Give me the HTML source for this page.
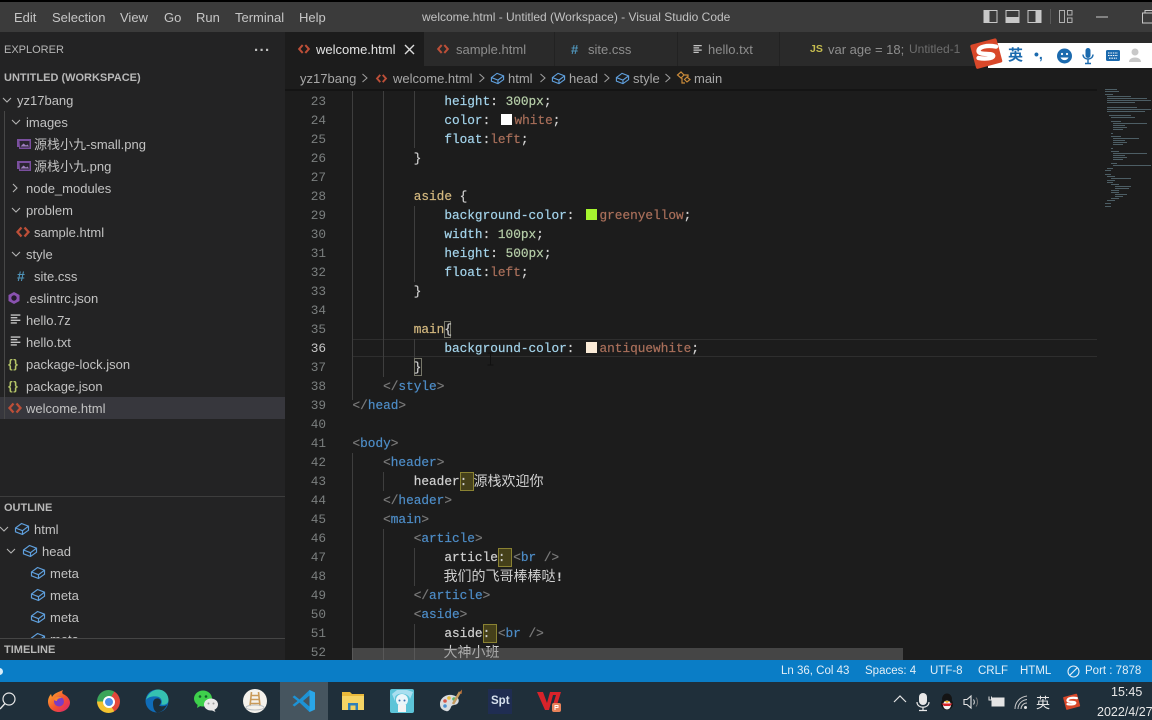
<!DOCTYPE html>
<html><head><meta charset="utf-8"><title>welcome.html - Visual Studio Code</title>
<style>
html,body{margin:0;padding:0;background:#1c1c1c}
#r{position:relative;width:1152px;height:720px;overflow:hidden;background:#1c1c1c;font-family:"Liberation Sans","Noto Sans CJK SC",sans-serif;color:#ccc;filter:blur(.3px)}
.a{position:absolute}
.t{position:absolute;white-space:nowrap}
.m{top:9px;font-size:13px;color:#c6c6c6;line-height:17px}
.tab{position:absolute;top:32px;height:34px;background:#2a2a2a;border-right:1px solid #222}
.tl{position:absolute;top:41px;font-size:13px;line-height:17px;color:#8e8e8e;white-space:nowrap}
.bc{position:absolute;top:70px;font-size:13px;line-height:17px;color:#a8a8a8;white-space:nowrap}
.row{position:absolute;font-size:13px;line-height:22px;height:22px;color:#c2c2c2;white-space:nowrap;margin-top:1px}
.ln{position:absolute;left:296px;width:30px;text-align:right;font:12.75px/19px "Liberation Mono",monospace;color:#7b7f7f;height:19px}
.c{position:absolute;font:12.75px/19px "Liberation Mono","Noto Sans CJK SC",monospace;white-space:pre;height:19px;color:#d0d0d0;margin-left:-.5px;-webkit-text-stroke:.2px}
.p{color:#a3d3ea}.v{color:#a96f5a}.n{color:#b7cfa9}.s{color:#d3b87f}.g{color:#7a7a7a}.k{color:#4d8cc6}.w{color:#d4d4d4}
.z{font-size:14px;color:#d0d0d0;margin-top:2px;-webkit-text-stroke:0}
.box{background:#45401a;outline:1px solid #8a8232;outline-offset:-1px}
.ig{position:absolute;width:1px;background:#3e3e3e}
.sw{display:inline-block;width:11px;height:11px;vertical-align:-1px}
.st{position:absolute;top:664px;font-size:11.5px;line-height:15px;color:#e3eef6;white-space:nowrap}
.tk{position:absolute;top:689px;width:24px;height:24px}
</style></head><body><div id="r">
<svg width="0" height="0" style="position:absolute"><defs>
<symbol id="cube" viewBox="0 0 16 16"><path d="M1.5 7 7.5 2.5 14.5 5.2V9.2L8.5 13.5 1.5 10.8Z M1.5 7 8.5 9.7 14.5 5.2 M8.5 9.7V13.5" fill="none" stroke="#5f9fdc" stroke-width="1.2"/></symbol>
<symbol id="html" viewBox="0 0 16 16"><path d="M6.5 3.5 2.5 8 6.5 12.5 M9.5 3.5 13.5 8 9.5 12.5" fill="none" stroke="#bd4f38" stroke-width="2.3"/></symbol>
<symbol id="img" viewBox="0 0 16 16"><path d="M1 3H15V13H3V11H1Z" fill="#7a4f9e"/><path d="M3.5 5H13.5V11.5H4Z" fill="#2a2530"/><path d="M4.5 10.5 7.5 7.5 10 9.5 11.5 8.5 13 10.5Z" fill="#a07fc0"/></symbol>
<symbol id="lines" viewBox="0 0 16 16"><path d="M2 3.5H13 M2 6.5H9.5 M2 9.5H13 M2 12.5H9" stroke="#c4c4c4" stroke-width="1.6"/></symbol>
<symbol id="ch" viewBox="0 0 10 10"><path d="M1 3 5 7 9 3" fill="none" stroke="#b4b4b4" stroke-width="1.1"/></symbol>
<symbol id="chr" viewBox="0 0 10 10"><path d="M3 1 7 5 3 9" fill="none" stroke="#b4b4b4" stroke-width="1.1"/></symbol>
<symbol id="sep" viewBox="0 0 8 12"><path d="M1.5 2 6 6 1.5 10" fill="none" stroke="#a0a0a0" stroke-width="1"/></symbol>
<symbol id="sg" viewBox="0 0 30 30"><rect x="2.5" y="3.5" width="24" height="22" rx="1.5" transform="rotate(-15 15 15)" fill="#d9482a"/><path d="M23 8.5C15 7 7.5 8.5 7.5 12.5 8 16.5 20 13.5 20.5 16.5 20.5 19 13 19.5 7.5 18.5" fill="none" stroke="#fff" stroke-width="3.8" stroke-linecap="round"/></symbol>
</defs></svg>

<!-- title bar -->
<div class="a" style="left:0;top:0;width:1152px;height:2px;background:#000"></div>
<div class="a" style="left:0;top:2px;width:1152px;height:30px;background:#3b3b3b"></div>
<span class="t m" style="left:14px">Edit</span><span class="t m" style="left:52px">Selection</span><span class="t m" style="left:120px">View</span><span class="t m" style="left:164px">Go</span><span class="t m" style="left:196px">Run</span><span class="t m" style="left:235px">Terminal</span><span class="t m" style="left:299px">Help</span>
<span class="t" style="left:422px;top:9px;font-size:12px;line-height:17px;color:#c2c2c2">welcome.html - Untitled (Workspace) - Visual Studio Code</span>
<svg class="a" style="left:980px;top:8px" width="172" height="18" viewBox="0 0 172 18">
<rect x="4" y="2.5" width="13" height="12" fill="none" stroke="#c8c8c8"/><rect x="4" y="2.5" width="5.5" height="12" fill="#c8c8c8"/>
<rect x="26" y="2.5" width="13" height="12" fill="none" stroke="#c8c8c8"/><rect x="26" y="9" width="13" height="5.5" fill="#c8c8c8"/>
<rect x="48" y="2.5" width="13" height="12" fill="none" stroke="#c8c8c8"/><rect x="55.5" y="2.5" width="5.5" height="12" fill="#c8c8c8"/>
<path d="M70.5 1V16" stroke="#5a5a5a"/>
<rect x="79.5" y="2.5" width="5" height="12" fill="none" stroke="#b0b0b0"/><rect x="87.5" y="2.5" width="4.5" height="4.5" fill="none" stroke="#b0b0b0"/><rect x="87.5" y="10" width="4.5" height="4.5" fill="none" stroke="#b0b0b0"/>
<path d="M116 9H128" stroke="#c8c8c8"/>
<rect x="162.5" y="5" width="10" height="10" fill="none" stroke="#c8c8c8"/><path d="M165 5V2.5H175" fill="none" stroke="#c8c8c8"/>
</svg>

<!-- sidebar -->
<div class="a" style="left:0;top:32px;width:285px;height:628px;background:#232324"></div>
<span class="t" style="left:4px;top:43px;font-size:11px;line-height:15px;color:#b6b6b6">EXPLORER</span>
<span class="t" style="left:254px;top:41px;font-size:15px;line-height:20px;color:#c0c0c0;font-weight:bold;letter-spacing:.5px">···</span>
<span class="t" style="left:4px;top:71px;font-size:11px;line-height:15px;font-weight:bold;color:#b8b8b8">UNTITLED (WORKSPACE)</span>
<div class="a" style="left:0;top:397px;width:285px;height:22px;background:#37373d"></div>
<div class="a" style="left:4px;top:111px;width:1px;height:308px;background:#474747"></div>

<svg class="a" style="left:2px;top:95px" width="10" height="10"><use href="#ch"/></svg><div class="row" style="left:17px;top:89px">yz17bang</div>
<svg class="a" style="left:11px;top:117px" width="10" height="10"><use href="#ch"/></svg><div class="row" style="left:26px;top:111px">images</div>
<svg class="a" style="left:16px;top:136px" width="16" height="16"><use href="#img"/></svg><div class="row" style="left:34px;top:133px">源栈小九-small.png</div>
<svg class="a" style="left:16px;top:158px" width="16" height="16"><use href="#img"/></svg><div class="row" style="left:34px;top:155px">源栈小九.png</div>
<svg class="a" style="left:10px;top:183px" width="10" height="10"><use href="#chr"/></svg><div class="row" style="left:26px;top:177px">node_modules</div>
<svg class="a" style="left:11px;top:205px" width="10" height="10"><use href="#ch"/></svg><div class="row" style="left:26px;top:199px">problem</div>
<svg class="a" style="left:15px;top:224px" width="16" height="16"><use href="#html"/></svg><div class="row" style="left:34px;top:221px">sample.html</div>
<svg class="a" style="left:11px;top:249px" width="10" height="10"><use href="#ch"/></svg><div class="row" style="left:26px;top:243px">style</div>
<span class="t" style="left:17px;top:268px;font-size:14px;line-height:16px;font-weight:bold;color:#4f93b8">#</span><div class="row" style="left:34px;top:265px">site.css</div>
<svg class="a" style="left:7px;top:291px" width="14" height="14" viewBox="0 0 14 14"><path d="M7 1 12.5 4V10L7 13 1.5 10V4Z" fill="#8a52b0"/><circle cx="7" cy="7" r="2.7" fill="#241c2c"/></svg><div class="row" style="left:26px;top:287px">.eslintrc.json</div>
<svg class="a" style="left:9px;top:312px" width="14" height="14" viewBox="0 0 16 16"><use href="#lines"/></svg><div class="row" style="left:26px;top:309px">hello.7z</div>
<svg class="a" style="left:9px;top:334px" width="14" height="14" viewBox="0 0 16 16"><use href="#lines"/></svg><div class="row" style="left:26px;top:331px">hello.txt</div>
<span class="t" style="left:8px;top:356px;font-size:12px;line-height:16px;font-weight:bold;color:#b4c468;letter-spacing:.6px">{}</span><div class="row" style="left:26px;top:353px">package-lock.json</div>
<span class="t" style="left:8px;top:378px;font-size:12px;line-height:16px;font-weight:bold;color:#b4c468;letter-spacing:.6px">{}</span><div class="row" style="left:26px;top:375px">package.json</div>
<svg class="a" style="left:7px;top:400px" width="16" height="16"><use href="#html"/></svg><div class="row" style="left:26px;top:397px">welcome.html</div>

<div class="a" style="left:0;top:496px;width:285px;height:1px;background:#3d3d3d"></div>
<span class="t" style="left:4px;top:501px;font-size:11px;line-height:15px;font-weight:bold;color:#b8b8b8">OUTLINE</span>
<div class="a" style="left:0;top:518px;width:285px;height:120px;overflow:hidden">
<svg class="a" style="left:-1px;top:6px" width="10" height="10"><use href="#ch"/></svg>
<svg class="a" style="left:14px;top:3px" width="16" height="16"><use href="#cube"/></svg><div class="row" style="left:34px;top:0">html</div>
<svg class="a" style="left:6px;top:28px" width="10" height="10"><use href="#ch"/></svg>
<svg class="a" style="left:22px;top:25px" width="16" height="16"><use href="#cube"/></svg><div class="row" style="left:42px;top:22px">head</div>
<svg class="a" style="left:30px;top:47px" width="16" height="16"><use href="#cube"/></svg><div class="row" style="left:50px;top:44px">meta</div>
<svg class="a" style="left:30px;top:69px" width="16" height="16"><use href="#cube"/></svg><div class="row" style="left:50px;top:66px">meta</div>
<svg class="a" style="left:30px;top:91px" width="16" height="16"><use href="#cube"/></svg><div class="row" style="left:50px;top:88px">meta</div>
<svg class="a" style="left:30px;top:113px" width="16" height="16"><use href="#cube"/></svg><div class="row" style="left:50px;top:110px">meta</div>
</div>
<div class="a" style="left:0;top:638px;width:285px;height:1px;background:#454545"></div>
<span class="t" style="left:4px;top:643px;font-size:11px;line-height:15px;font-weight:bold;color:#b8b8b8">TIMELINE</span>

<!-- tabs -->
<div class="a" style="left:285px;top:32px;width:867px;height:34px;background:#242425"></div>
<div class="a" style="left:285px;top:32px;width:139px;height:34px;background:#1c1c1c"></div>
<div class="tab" style="left:424px;width:130px"></div>
<div class="tab" style="left:555px;width:122px"></div>
<div class="tab" style="left:678px;width:101px"></div>
<div class="tab" style="left:780px;width:372px"></div>
<svg class="a" style="left:297px;top:42px" width="14" height="14"><use href="#html"/></svg>
<span class="t" style="left:316px;top:41px;font-size:13px;line-height:17px;color:#e4e4e4">welcome.html</span>
<svg class="a" style="left:404px;top:44px" width="11" height="11" viewBox="0 0 11 11"><path d="M1 1 10 10M10 1 1 10" stroke="#ddd" stroke-width="1.4"/></svg>
<svg class="a" style="left:436px;top:42px" width="14" height="14"><use href="#html"/></svg><span class="tl" style="left:456px">sample.html</span>
<span class="t" style="left:571px;top:41px;font-size:13px;line-height:17px;font-weight:bold;color:#4f93b8">#</span><span class="tl" style="left:588px">site.css</span>
<svg class="a" style="left:692px;top:43px" width="12" height="12" viewBox="0 0 16 16"><use href="#lines"/></svg><span class="tl" style="left:708px">hello.txt</span>
<span class="t" style="left:810px;top:42px;font-size:10.5px;line-height:15px;font-weight:bold;color:#c6bd4f">JS</span><span class="tl" style="left:828px">var age = 18;</span><span class="tl" style="left:909px;font-size:12px;color:#6e6e6e">Untitled-1</span>

<!-- breadcrumbs -->
<span class="bc" style="left:300px">yz17bang</span>
<svg class="a" style="left:361px;top:72px" width="8" height="12"><use href="#sep"/></svg>
<svg class="a" style="left:375px;top:72px" width="13" height="13"><use href="#html"/></svg>
<span class="bc" style="left:393px">welcome.html</span>
<svg class="a" style="left:478px;top:72px" width="8" height="12"><use href="#sep"/></svg>
<svg class="a" style="left:490px;top:71px" width="15" height="15"><use href="#cube"/></svg>
<span class="bc" style="left:508px">html</span>
<svg class="a" style="left:539px;top:72px" width="8" height="12"><use href="#sep"/></svg>
<svg class="a" style="left:551px;top:71px" width="15" height="15"><use href="#cube"/></svg>
<span class="bc" style="left:569px">head</span>
<svg class="a" style="left:603px;top:72px" width="8" height="12"><use href="#sep"/></svg>
<svg class="a" style="left:615px;top:71px" width="15" height="15"><use href="#cube"/></svg>
<span class="bc" style="left:633px">style</span>
<svg class="a" style="left:664px;top:72px" width="8" height="12"><use href="#sep"/></svg>
<svg class="a" style="left:676px;top:70px" width="16" height="16" viewBox="0 0 16 16"><path d="M5 2 1.5 5 5 8 8 5ZM11 7 8.5 9.5 11 12 14 9.5ZM6 8V13H9M8 5H12V7" fill="none" stroke="#c98a3a" stroke-width="1.2"/></svg>
<span class="bc" style="left:694px">main</span>

<!-- editor -->
<div class="a" style="left:285px;top:89px;width:812px;height:2px;background:#141414"></div>
<div class="a" style="left:353px;top:339px;width:744px;height:1px;background:#2e2e2e"></div>
<div class="a" style="left:353px;top:356px;width:744px;height:1px;background:#2e2e2e"></div>
<div class="ig" style="left:352px;top:91px;height:309px"></div>
<div class="ig" style="left:383px;top:91px;height:286px"></div>
<div class="ig" style="left:414px;top:91px;height:57px"></div>
<div class="ig" style="left:414px;top:206px;height:76px"></div>
<div class="ig" style="left:414px;top:339px;height:19px"></div>
<div class="ig" style="left:352px;top:453px;height:207px"></div>
<div class="ig" style="left:383px;top:472px;height:19px"></div>
<div class="ig" style="left:383px;top:529px;height:131px"></div>
<div class="ig" style="left:414px;top:548px;height:38px"></div>
<div class="ig" style="left:414px;top:624px;height:36px"></div>

<span class="ln" style="top:92px">23</span><span class="c" style="left:353px;top:92px">            <span class="p">height</span><span class="w">: </span><span class="n">300px</span><span class="w">;</span></span>
<span class="ln" style="top:111px">24</span><span class="c" style="left:353px;top:111px">            <span class="p">color</span><span class="w">: </span></span><span class="a sw" style="left:501px;top:114px;background:#fff"></span><span class="c" style="left:515px;top:111px"><span class="v">white</span><span class="w">;</span></span>
<span class="ln" style="top:130px">25</span><span class="c" style="left:353px;top:130px">            <span class="p">float</span><span class="w">:</span><span class="v">left</span><span class="w">;</span></span>
<span class="ln" style="top:149px">26</span><span class="c" style="left:353px;top:149px">        }</span>
<span class="ln" style="top:168px">27</span>
<span class="ln" style="top:187px">28</span><span class="c" style="left:353px;top:187px">        <span class="s">aside</span> {</span>
<span class="ln" style="top:206px">29</span><span class="c" style="left:353px;top:206px">            <span class="p">background-color</span><span class="w">: </span></span><span class="a sw" style="left:586px;top:209px;background:#a6f52f"></span><span class="c" style="left:600px;top:206px"><span class="v">greenyellow</span><span class="w">;</span></span>
<span class="ln" style="top:225px">30</span><span class="c" style="left:353px;top:225px">            <span class="p">width</span><span class="w">: </span><span class="n">100px</span><span class="w">;</span></span>
<span class="ln" style="top:244px">31</span><span class="c" style="left:353px;top:244px">            <span class="p">height</span><span class="w">: </span><span class="n">500px</span><span class="w">;</span></span>
<span class="ln" style="top:263px">32</span><span class="c" style="left:353px;top:263px">            <span class="p">float</span><span class="w">:</span><span class="v">left</span><span class="w">;</span></span>
<span class="ln" style="top:282px">33</span><span class="c" style="left:353px;top:282px">        }</span>
<span class="ln" style="top:301px">34</span>
<span class="a" style="left:444px;top:321px;width:7px;height:17px;box-sizing:border-box;border:1px solid #77776a"></span>
<span class="ln" style="top:320px">35</span><span class="c" style="left:353px;top:320px">        <span class="s">main</span>{</span>
<span class="ln" style="top:339px;color:#c6c6c6">36</span><span class="c" style="left:353px;top:339px">            <span class="p">background-color</span><span class="w">: </span></span><span class="a sw" style="left:586px;top:342px;background:#faebd7"></span><span class="c" style="left:600px;top:339px"><span class="v">antiquewhite</span><span class="w">;</span></span>
<span class="a" style="left:414px;top:358px;width:8px;height:18px;box-sizing:border-box;border:1px solid #77776a"></span>
<span class="ln" style="top:358px">37</span><span class="c" style="left:353px;top:358px">        }</span>
<svg class="a" style="left:486px;top:352px" width="9" height="14" viewBox="0 0 9 14"><path d="M1.5 1H7.5M4.5 1V13M1.5 13H7.5" stroke="#111" stroke-width="1"/></svg>
<span class="ln" style="top:377px">38</span><span class="c" style="left:353px;top:377px">    <span class="g">&lt;/</span><span class="k">style</span><span class="g">&gt;</span></span>
<span class="ln" style="top:396px">39</span><span class="c" style="left:353px;top:396px"><span class="g">&lt;/</span><span class="k">head</span><span class="g">&gt;</span></span>
<span class="ln" style="top:415px">40</span>
<span class="ln" style="top:434px">41</span><span class="c" style="left:353px;top:434px"><span class="g">&lt;</span><span class="k">body</span><span class="g">&gt;</span></span>
<span class="ln" style="top:453px">42</span><span class="c" style="left:353px;top:453px">    <span class="g">&lt;</span><span class="k">header</span><span class="g">&gt;</span></span>
<span class="a box" style="left:460px;top:472px;width:14px;height:19px"></span>
<span class="ln" style="top:472px">43</span><span class="c" style="left:353px;top:472px">        header: </span><span class="c z" style="left:474px;top:472px">源栈欢迎你</span>
<span class="ln" style="top:491px">44</span><span class="c" style="left:353px;top:491px">    <span class="g">&lt;/</span><span class="k">header</span><span class="g">&gt;</span></span>
<span class="ln" style="top:510px">45</span><span class="c" style="left:353px;top:510px">    <span class="g">&lt;</span><span class="k">main</span><span class="g">&gt;</span></span>
<span class="ln" style="top:529px">46</span><span class="c" style="left:353px;top:529px">        <span class="g">&lt;</span><span class="k">article</span><span class="g">&gt;</span></span>
<span class="a box" style="left:498px;top:548px;width:14px;height:19px"></span>
<span class="ln" style="top:548px">47</span><span class="c" style="left:353px;top:548px">            article: <span class="g">&lt;</span><span class="k">br</span> <span class="g">/&gt;</span></span>
<span class="ln" style="top:567px">48</span><span class="c z" style="left:444px;top:567px">我们的飞哥棒棒哒<span style="font:bold 13px 'Liberation Mono',monospace">!</span></span>
<span class="ln" style="top:586px">49</span><span class="c" style="left:353px;top:586px">        <span class="g">&lt;/</span><span class="k">article</span><span class="g">&gt;</span></span>
<span class="ln" style="top:605px">50</span><span class="c" style="left:353px;top:605px">        <span class="g">&lt;</span><span class="k">aside</span><span class="g">&gt;</span></span>
<span class="a box" style="left:483px;top:624px;width:14px;height:19px"></span>
<span class="ln" style="top:624px">51</span><span class="c" style="left:353px;top:624px">            aside: <span class="g">&lt;</span><span class="k">br</span> <span class="g">/&gt;</span></span>
<span class="ln" style="top:643px">52</span><span class="c z" style="left:444px;top:643px">大神小班</span>
<div class="a" style="left:352px;top:648px;width:551px;height:12px;background:rgba(120,120,120,.45)"></div>

<!-- minimap -->
<svg class="a" style="left:1097px;top:88px" width="55" height="122" viewBox="0 0 55 122" shape-rendering="crispEdges">
<g fill="#6f8a96" opacity=".6">
<rect x="8" y="1" width="12" height="1"/><rect x="8" y="3" width="14" height="1"/><rect x="8" y="6" width="8" height="1"/>
<rect x="10" y="8" width="24" height="1"/><rect x="10" y="10" width="40" height="1"/><rect x="10" y="12" width="44" height="1"/><rect x="10" y="14" width="28" height="1"/>
<rect x="10" y="19" width="30" height="1"/><rect x="10" y="21" width="44" height="1"/><rect x="10" y="23" width="38" height="1"/>
<rect x="12" y="27" width="22" height="1"/><rect x="14" y="29" width="24" height="1"/>
<rect x="14" y="33" width="10" height="1"/><rect x="16" y="35" width="34" height="1"/><rect x="16" y="37" width="12" height="1"/><rect x="16" y="39" width="14" height="1"/><rect x="16" y="41" width="10" height="1"/>
<rect x="14" y="45" width="2" height="1"/><rect x="14" y="48" width="10" height="1"/><rect x="16" y="50" width="26" height="1"/><rect x="16" y="52" width="12" height="1"/><rect x="16" y="54" width="14" height="1"/><rect x="16" y="56" width="10" height="1"/>
<rect x="14" y="60" width="2" height="1"/><rect x="14" y="63" width="8" height="1"/><rect x="16" y="65" width="34" height="1"/><rect x="16" y="67" width="12" height="1"/><rect x="16" y="69" width="14" height="1"/><rect x="16" y="71" width="10" height="1"/>
<rect x="14" y="75" width="6" height="1"/><rect x="16" y="77" width="38" height="1"/><rect x="10" y="80" width="6" height="1"/><rect x="8" y="82" width="6" height="1"/>
<rect x="8" y="86" width="6" height="1"/><rect x="10" y="88" width="8" height="1"/><rect x="14" y="90" width="20" height="1"/><rect x="10" y="92" width="8" height="1"/><rect x="10" y="94" width="6" height="1"/><rect x="14" y="96" width="8" height="1"/><rect x="18" y="98" width="16" height="1"/><rect x="18" y="100" width="14" height="1"/><rect x="14" y="102" width="8" height="1"/><rect x="14" y="104" width="8" height="1"/><rect x="18" y="106" width="12" height="1"/><rect x="18" y="108" width="8" height="1"/><rect x="14" y="110" width="8" height="1"/><rect x="10" y="112" width="8" height="1"/><rect x="8" y="115" width="6" height="1"/><rect x="8" y="118" width="6" height="1"/>
</g></svg>

<!-- sogou IME -->
<div class="a" style="left:988px;top:43px;width:164px;height:25px;background:#fff"></div>
<svg class="a" style="left:970px;top:37px" width="34" height="34"><use href="#sg"/></svg>
<span class="t" style="left:1008px;top:47px;font-size:15px;line-height:18px;font-weight:bold;color:#1b6aae">英</span>
<span class="t" style="left:1034px;top:45px;font-size:14px;line-height:18px;font-weight:bold;color:#1b6aae">•,</span>
<svg class="a" style="left:1056px;top:47px" width="90" height="18" viewBox="0 0 90 18">
<circle cx="8.5" cy="9" r="7.5" fill="#1b6aae"/><circle cx="6" cy="7" r="1.1" fill="#fff"/><circle cx="11" cy="7" r="1.1" fill="#fff"/><path d="M4.5 10.5C6 14 11 14 12.5 10.5Z" fill="#fff"/>
<rect x="29.5" y="1" width="5" height="10" rx="2.5" fill="#1b6aae"/><path d="M27 7.5C27 13.5 37 13.500 37 7.5M32 12V16.5M29 16.5H35" fill="none" stroke="#1b6aae" stroke-width="1.4"/>
<rect x="50" y="3" width="14" height="11" rx="1.5" fill="#1b6aae"/><path d="M52 6H62M52 8.5H62M53 11.2H61" stroke="#fff" stroke-width="1.1" stroke-dasharray="1.5 .9"/>
<circle cx="79" cy="5" r="3.5" fill="#c8c8c8"/><path d="M73 15C73 9 85 9 85 15Z" fill="#c8c8c8"/>
</svg>

<!-- status bar -->
<div class="a" style="left:0;top:660px;width:1152px;height:22px;background:#0a7dc6"></div>
<div class="a" style="left:-4px;top:668px;width:7px;height:7px;border-radius:50%;background:#d8ecf8"></div>
<span class="st" style="left:781px">Ln 36, Col 43</span>
<span class="st" style="left:865px">Spaces: 4</span>
<span class="st" style="left:930px">UTF-8</span>
<span class="st" style="left:978px">CRLF</span>
<span class="st" style="left:1020px">HTML</span>
<svg class="a" style="left:1067px;top:665px" width="13" height="13" viewBox="0 0 13 13"><circle cx="6.5" cy="6.5" r="5.5" fill="none" stroke="#e3eef6" stroke-width="1.1"/><path d="M2.8 10.2 10.2 2.8" stroke="#e3eef6" stroke-width="1.1"/></svg>
<span class="st" style="left:1085px">Port : 7878</span>

<!-- taskbar -->
<div class="a" style="left:0;top:682px;width:1152px;height:38px;background:#1f2f3a"></div>
<div class="a" style="left:280px;top:682px;width:48px;height:38px;background:#46555f"></div>
<svg class="a" style="left:0;top:690px" width="18" height="22" viewBox="0 0 18 22"><circle cx="9" cy="9" r="6" fill="none" stroke="#e8e8e8" stroke-width="1.2"/><path d="M5 13.5 0 19" stroke="#e8e8e8" stroke-width="1.4"/></svg>
<!-- firefox -->
<svg class="tk" style="left:47px" viewBox="0 0 24 24"><defs><linearGradient id="ff" x1="0" y1="0" x2="1" y2="1"><stop offset="0" stop-color="#ffb52e"/><stop offset=".55" stop-color="#f3512f"/><stop offset="1" stop-color="#d9207a"/></linearGradient></defs><path d="M12 23C5 23 1 18 1 12.5 1 9 3 6 4 5L5 8C7 4 12 3 16 1 15 3 15 4 16 5 21 7 23 11 23 13.5 23 18.5 18 23 12 23Z" fill="url(#ff)"/><circle cx="12" cy="12.5" r="5" fill="#7b3cc4"/><path d="M7 10C9 7 13 7 15 9 12 9 10 10 10 12 8 12 7 11 7 10Z" fill="#f7862d"/></svg>
<!-- chrome -->
<div class="a" style="left:97px;top:690px;width:23px;height:23px;border-radius:50%;background:conic-gradient(from 30deg,#e2483b 0 120deg,#f4c330 120deg 240deg,#3ba55a 240deg 360deg)"></div>
<div class="a" style="left:102.5px;top:695.5px;width:12px;height:12px;border-radius:50%;background:#4d8fe8;border:2px solid #fff;box-sizing:border-box"></div>
<!-- edge -->
<svg class="tk" style="left:145px" viewBox="0 0 24 24"><circle cx="12" cy="12" r="11.5" fill="#0f6cb8"/><path d="M1 11C3 3 10 .5 13 .5 19 .5 23.5 5 23.5 11 23.5 15 19.5 16.5 16 15.5 18 13 16.5 8 12 7.5 7 7 3 8 1 11Z" fill="#35c1b1"/><path d="M8 14C8 10 12 8.5 14.5 10 17 12 16 15 14 16.5 17 18 20 17 22 16 19.5 21 15.5 23.5 12 23.5 8.5 22 8 17 8 14Z" fill="#1c2f3a"/></svg>
<!-- wechat -->
<svg class="tk" style="left:194px" viewBox="0 0 24 24"><ellipse cx="9" cy="9.5" rx="9" ry="8" fill="#3ed04c"/><path d="M4 14 3 19 8 16Z" fill="#3ed04c"/><circle cx="6" cy="7.5" r="1.3" fill="#14602a"/><circle cx="12" cy="7.5" r="1.3" fill="#14602a"/><ellipse cx="17" cy="15.5" rx="7" ry="6" fill="#e8e8e8"/><path d="M20 20 21.5 23 17 21Z" fill="#e8e8e8"/><circle cx="14.5" cy="14.5" r="1" fill="#9a9a9a"/><circle cx="19.5" cy="14.5" r="1" fill="#9a9a9a"/></svg>
<!-- ladder -->
<svg class="tk" style="left:243px" viewBox="0 0 24 24"><circle cx="12" cy="12" r="12" fill="#f4f2ec"/><path d="M8.5 3 7 17M15.5 3 17 17M8 6.5H16M7.8 10.5H16.2M7.3 14.5H16.7" stroke="#c99a58" stroke-width="1.6" fill="none"/><ellipse cx="12" cy="18.5" rx="9" ry="2.5" fill="none" stroke="#b9bfc4"/></svg>
<!-- vscode -->
<svg class="tk" style="left:292px" viewBox="0 0 24 24"><path d="M17.5 1 23 3.5V20.5L17.5 23 7.5 13.5 2.5 17.5 0.5 16 5.5 12 0.5 8 2.5 6.5 7.5 10.5ZM17.5 6.5 11 12 17.5 17.5Z" fill="#1d93d6"/><path d="M17.5 1 23 3.5V20.5L17.5 23Z" fill="#2aa6e8"/></svg>
<!-- folder -->
<svg class="tk" style="left:341px" viewBox="0 0 24 24"><path d="M1 3H9L11 5H23V21H1Z" fill="#e9b93b"/><rect x="1" y="7" width="22" height="14" fill="#f5d465"/><rect x="7" y="14" width="10" height="7" fill="#2f7fb8"/><rect x="9.5" y="16.5" width="5" height="4.5" fill="#f0d060"/></svg>
<!-- anime -->
<svg class="tk" style="left:390px" viewBox="0 0 24 24"><rect width="24" height="24" rx="2" fill="#5cc4d8"/><circle cx="12" cy="11" r="6" fill="#eaf6fa"/><path d="M5 9C5 3 19 3 20 10L23 3 17 1H7L2 5 5 12Z" fill="#a8dff0"/><rect x="8" y="16" width="8" height="7" fill="#f3f3f3"/><circle cx="9.5" cy="11.5" r="1" fill="#3a6fb0"/><circle cx="14.5" cy="11.5" r="1" fill="#3a6fb0"/></svg>
<!-- paint -->
<svg class="tk" style="left:439px" viewBox="0 0 24 24"><path d="M1 15C1 9 7 5 13 6 19 7 21 11 19 14 17 17 13 15 12 18 11 21 9 23 7 22 3 21 1 19 1 15Z" fill="#d9dde0"/><circle cx="6" cy="12" r="1.8" fill="#d9574a"/><circle cx="10" cy="9" r="1.8" fill="#e8bf3f"/><circle cx="15" cy="10" r="1.8" fill="#59b36a"/><circle cx="6" cy="17" r="1.8" fill="#4c8fd0"/><path d="M14 15 21 3" stroke="#c49a5e" stroke-width="2.5"/><path d="M20 4 23 .5 22.5 5Z" fill="#c97a3c"/></svg>
<!-- spt -->
<div class="a" style="left:488px;top:689px;width:24px;height:25px;background:#1f2d52"></div>
<span class="t" style="left:491px;top:694px;font-size:11.5px;line-height:14px;font-weight:bold;color:#d8e2ee">Spt</span>
<!-- wps -->
<svg class="tk" style="left:537px" viewBox="0 0 24 24"><path d="M0 3H6L10 14 13 3H24L19 19H15L19 6H16L12 21H8Z" fill="#d8232a"/><rect x="15" y="14" width="9" height="9" rx="2" fill="#e8825a"/><path d="M18 21V16.5H21V18.5H18" stroke="#fff" fill="none"/></svg>

<!-- tray -->
<svg class="a" style="left:893px;top:694px" width="14" height="10" viewBox="0 0 14 10"><path d="M1 8 7 2 13 8" fill="none" stroke="#e4e4e4" stroke-width="1.2"/></svg>
<svg class="a" style="left:916px;top:692px" width="14" height="20" viewBox="0 0 14 20"><rect x="3" y="1" width="8" height="12" rx="4" fill="#e8e8e8"/><path d="M1 10C1 17 13 17 13 10M7 15V18M3 18.5H11" fill="none" stroke="#e8e8e8" stroke-width="1.2"/></svg>
<svg class="a" style="left:939px;top:693px" width="16" height="18" viewBox="0 0 16 18"><ellipse cx="8" cy="6" rx="5" ry="5.5" fill="#141414"/><ellipse cx="8" cy="11" rx="6" ry="6" fill="#141414"/><ellipse cx="8" cy="12" rx="4" ry="4.5" fill="#f2f2f2"/><path d="M2.5 10.5H13.5L11 13H5Z" fill="#d8242a"/><path d="M5 8H11L8 10Z" fill="#f0b020"/></svg>
<svg class="a" style="left:963px;top:694px" width="17" height="16" viewBox="0 0 17 16"><path d="M1 5.5H4L8 2V14L4 10.5H1Z" fill="none" stroke="#e4e4e4" stroke-width="1.1"/><path d="M10.5 5.5C11.5 7 11.5 9 10.5 10.5" fill="none" stroke="#e4e4e4"/><path d="M13 3.5C15 6 15 10 13 12.5" fill="none" stroke="#777"/></svg>
<svg class="a" style="left:988px;top:695px" width="17" height="14" viewBox="0 0 17 14"><rect x="4" y="3" width="12" height="8" fill="#e4e4e4" stroke="#e4e4e4"/><path d="M1 1.5V5M3.5 1.5V5M0.5 5H4" stroke="#e4e4e4"/></svg>
<svg class="a" style="left:1014px;top:695px" width="15" height="15" viewBox="0 0 15 15"><path d="M1 14C1 7 6 2 13 1M4 14C4 9 8 5 13 4.5M7 14C7 11 9.5 8 13 8" fill="none" stroke="#c8c8c8"/><circle cx="11.5" cy="12.5" r="1.5" fill="#e4e4e4"/></svg>
<span class="t" style="left:1036px;top:695px;font-size:14px;line-height:16px;color:#e6e6e6">英</span>
<svg class="a" style="left:1063px;top:693px" width="18" height="18" viewBox="0 0 30 30"><use href="#sg"/></svg>
<span class="t" style="left:1111px;top:685px;font-size:12.5px;line-height:15px;color:#e8e8e8">15:45</span>
<span class="t" style="left:1097px;top:705px;font-size:12.5px;line-height:15px;color:#e8e8e8">2022/4/27</span>
</div></body></html>
